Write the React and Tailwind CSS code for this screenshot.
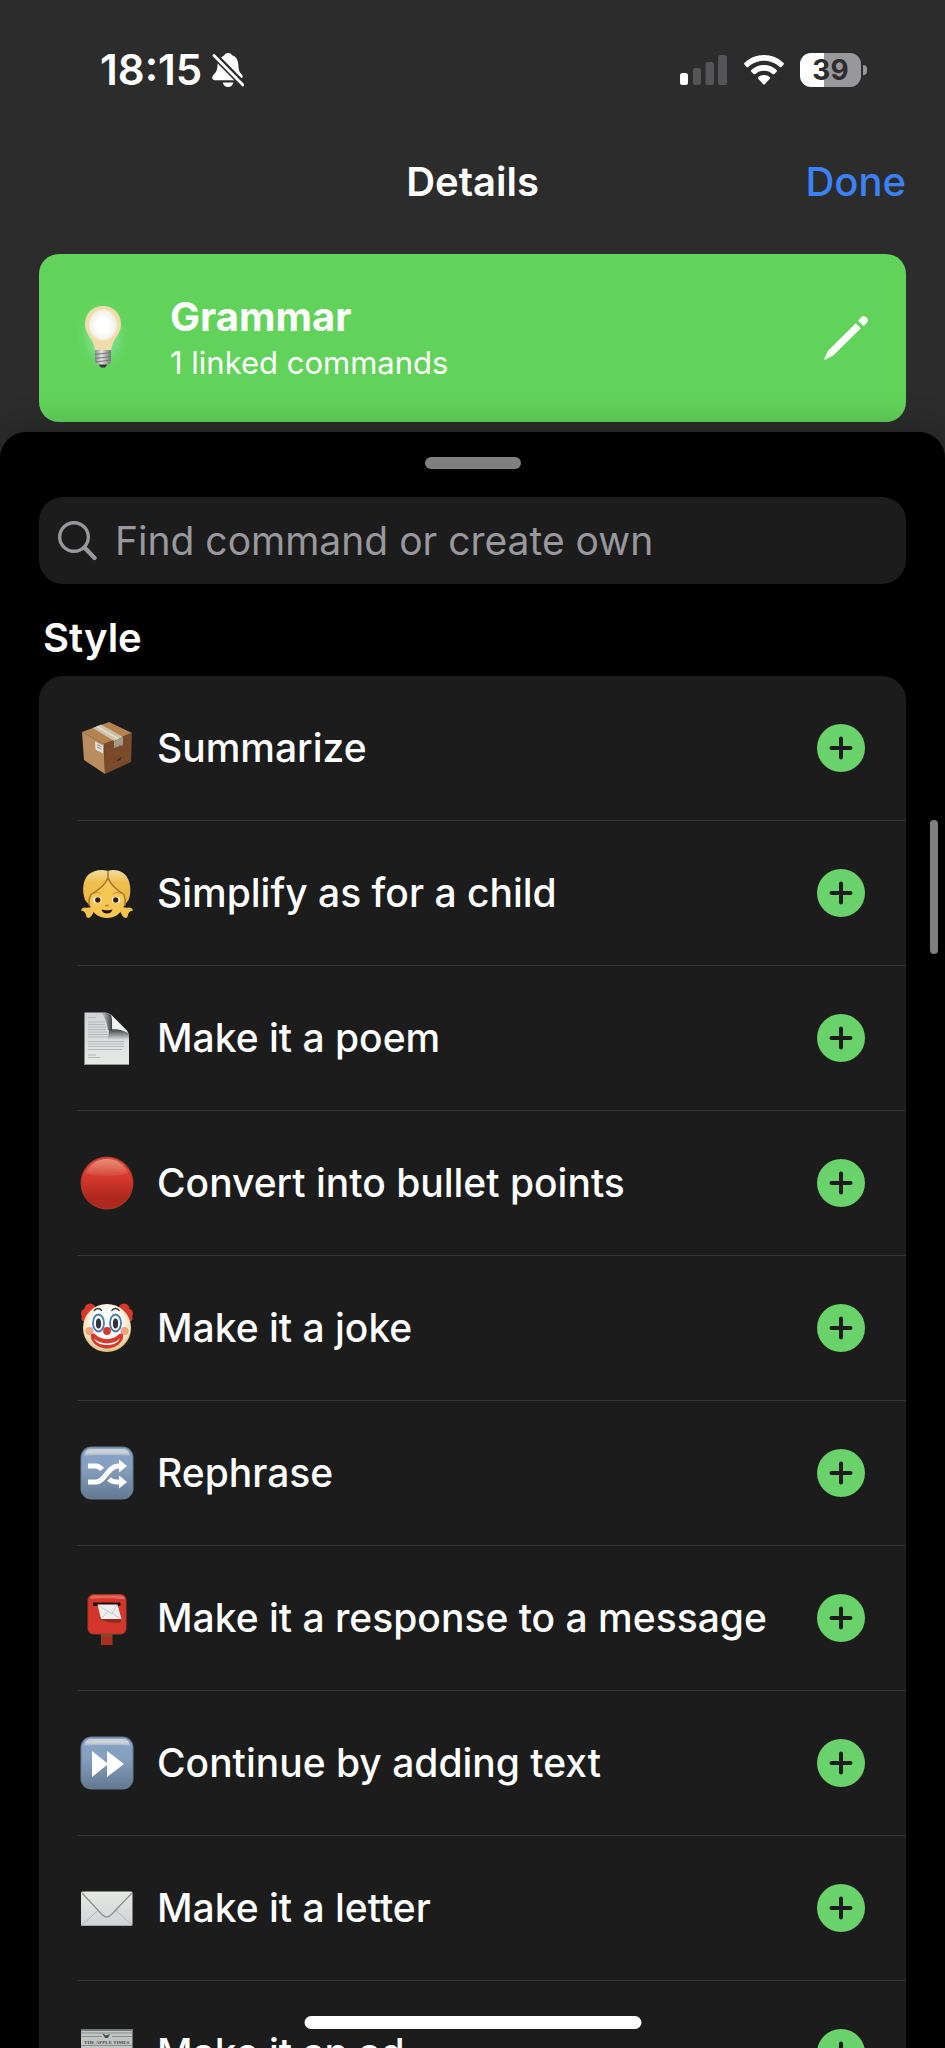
import React from "react";

function BellOffIcon() {
  return (
    <svg className="h-9 w-8" viewBox="0 0 32 36" fill="none" aria-hidden="true">
      <path
        d="M16 1c-1.900 0-3.300.9-3.900 2.500-1.200.5-2.300 1.200-3.100 2.100L29.500 26.200c.8-.3 1.200-1 1.200-1.700 0-1.200-.9-2-1.900-3.100-1.600-1.700-2.200-4-2.500-8.900-.3-5-2.300-8-6.400-9.200C19.300 1.700 17.900 1 16 1Z"
        fill="white"
      />
      <path
        d="M5.900 10.600 23.200 28.200H3c-1.700 0-2.800-1-2.800-2.500 0-1.500 1-2.500 2-3.600 2-2.100 2.900-3.900 3.300-8.600.1-1 .2-2 .4-2.900Z"
        fill="white"
      />
      <path d="M10.800 30.500h10.600c-.4 2.700-2.500 4.500-5.300 4.500s-4.900-1.800-5.300-4.500Z" fill="white" />
      <path d="m2 3.500 29 29.500" stroke="#2c2c2c" strokeWidth="6" />
      <path d="m2 3.500 29 29.500" stroke="white" strokeWidth="2.800" strokeLinecap="round" />
    </svg>
  );
}

function SignalIcon() {
  return (
    <svg className="h-8 w-12" viewBox="0 0 48 32" aria-hidden="true">
      <rect x="0" y="19" width="8" height="12" rx="2.500" fill="#ffffff" />
      <rect x="13" y="14" width="8" height="17" rx="2.500" fill="#555557" />
      <rect x="25.500" y="8" width="8.500" height="23" rx="2.500" fill="#555557" />
      <rect x="38" y="1" width="9" height="30" rx="2.500" fill="#555557" />
    </svg>
  );
}

function WifiIcon() {
  return (
    <svg className="h-8 w-10" viewBox="0 0 40 32" fill="white" aria-hidden="true">
      <path d="M20 1C12.400 1 5.600 4 .4 8.900c-.5.500-.5 1.200 0 1.700l2.300 2.300c.5.500 1.200.5 1.700 0C8.500 9 14 6.700 20 6.700S31.500 9 35.600 12.900c.5.500 1.200.5 1.700 0l2.300-2.300c.5-.5.500-1.200 0-1.700C34.400 4 27.600 1 20 1Z" />
      <path d="M20 11c-4.900 0-9.300 1.900-12.700 5-.5.500-.5 1.200 0 1.700l2.400 2.300c.4.400 1.100.4 1.600 0 2.300-2.100 5.400-3.300 8.700-3.300s6.400 1.200 8.700 3.300c.5.400 1.200.4 1.600 0l2.400-2.300c.5-.5.500-1.200 0-1.700-3.400-3.100-7.800-5-12.700-5Z" />
      <path d="M20 21c-2.200 0-4.200.8-5.800 2.100-.5.500-.5 1.200 0 1.700l5 5.400c.4.500 1.200.5 1.600 0l5-5.400c.5-.5.500-1.200 0-1.700C24.200 21.800 22.200 21 20 21Z" />
    </svg>
  );
}

function Battery() {
  return (
    <div className="flex items-center gap-0.5">
      <div className="flex h-[34px] w-[61px] items-center justify-center rounded-[11px] bg-linear-to-r from-white from-39% to-[#98989b] to-39% text-[28px] leading-8 font-bold text-[#2c2c2c]">
        39
      </div>
      <div className="h-2.5 w-1 rounded-r-full bg-[#98989b]" />
    </div>
  );
}

function BulbIcon() {
  return (
    <svg className="h-20 w-14 shrink-0" viewBox="0 0 56 80" aria-hidden="true">
      <defs>
        <radialGradient id="bulbGlow">
          <stop offset="0.5" stopColor="#7be08a" stopOpacity="0.8" />
          <stop offset="1" stopColor="#61d35a" stopOpacity="0" />
        </radialGradient>
        <radialGradient id="bulbGlass">
          <stop offset="0.4" stopColor="#ffffff" />
          <stop offset="0.85" stopColor="#f3f1ea" />
          <stop offset="1" stopColor="#f0dcaa" />
        </radialGradient>
        <linearGradient id="bulbBase">
          <stop offset="0" stopColor="#8b8b8d" />
          <stop offset="0.4" stopColor="#e2e2e2" />
          <stop offset="1" stopColor="#77777a" />
        </linearGradient>
      </defs>
      <ellipse cx="28" cy="37" rx="28" ry="38" fill="url(#bulbGlow)" />
      <path
        d="M28 8C17.500 8 10 15.500 10 26c0 6 2.500 10 5.500 14.500C18 44.500 19.500 48 20 53h16c.5-5 2-8.500 4.500-12.500C43.500 36 46 32 46 26 46 15.500 38.500 8 28 8Z"
        fill="#f0dcaa"
      />
      <ellipse cx="28" cy="27" rx="15" ry="16.500" fill="url(#bulbGlass)" />
      <path d="M20 52h16v11c0 2-1.500 3.500-3.500 4h-9C21.500 66.500 20 65 20 63Z" fill="url(#bulbBase)" />
      <path d="m20 56.500 16-2M20 60.500l16-2M21 64l14.500-2" stroke="#76767a" strokeWidth="1" />
      <path d="M23.500 66.500h9L30 69.500h-4Z" fill="#33363a" />
    </svg>
  );
}

function PencilIcon() {
  return (
    <svg className="size-11" viewBox="0 0 44 44" fill="white" aria-hidden="true">
      <path d="m31.800 7.200 5 5L9.500 39.200 1.400 43.600c-.8.400-1.400-.2-1.100-1L4.300 34.400Z" />
      <path d="m34.200 4.800 2.600-3.200c1.800-2 5-1.400 6.300.6 1.200 1.900.9 3.700-.5 5l-3.200 2.700Z" />
    </svg>
  );
}

function SearchIcon() {
  return (
    <svg className="size-10 shrink-0" viewBox="0 0 40 40" fill="none" stroke="#98989d" aria-hidden="true">
      <circle cx="17" cy="16" r="14.300" strokeWidth="3.400" />
      <path d="m27.500 26.500 10 10.500" strokeWidth="4.400" strokeLinecap="round" />
    </svg>
  );
}

function PlusIcon() {
  return (
    <svg className="size-12" viewBox="0 0 48 48" aria-hidden="true">
      <circle cx="24" cy="24" r="24" fill="#6ad26a" />
      <path d="M24 14.500v19M14.500 24h19" stroke="#1c1c1c" strokeWidth="4" strokeLinecap="round" />
    </svg>
  );
}

function Emoji({ children }) {
  return (
    <svg className="size-[54px] shrink-0" viewBox="0 0 54 54" aria-hidden="true">
      {children}
    </svg>
  );
}

function PackageEmoji() {
  return (
    <Emoji>
      <path d="M29 1 52 12 24 23 2 11Z" fill="#b5834f" />
      <path d="M2 11 24 23 25 53 4 39Z" fill="#b98d5d" />
      <path d="M24 23 52 12 51 41 25 53Z" fill="#7b4a2a" />
      <path d="m13 7 8-3.500L43 16l-9 4Z" fill="#cbc3b2" />
      <path d="m17 5.500 21.500 12.500" stroke="#e9dfb8" strokeWidth="1.500" />
      <path d="m34 20 9-4v8l-9 3Z" fill="#a39a8c" />
      <path d="m15 20.500 8 4v8l-7.500-4Z" fill="#e3e3e0" />
      <path d="m17 23.500 4.500 2.200M17 26l4.500 2.200" stroke="#8c8c8c" strokeWidth="1" />
      <path d="m37 39.500 4-3-1 2.500Z" fill="#3c2314" stroke="#3c2314" strokeWidth="0.800" />
      <path d="m28 29 20-8M28 46l20-9" stroke="#94602f" strokeWidth="1" strokeDasharray="1 3" />
    </Emoji>
  );
}

function GirlEmoji() {
  return (
    <Emoji>
      <defs>
        <linearGradient id="girlHair" x2="0" y2="1">
          <stop offset="0" stopColor="#f3dca0" />
          <stop offset="0.35" stopColor="#efbf4d" />
          <stop offset="1" stopColor="#e9b43f" />
        </linearGradient>
      </defs>
      <path d="M14 40c-3 1.500-6 2-9 1.500-2 0-3.500 1-4 3 3 .5 4.500 2 5 4.500.3 2 1 3 2.500 3 2.500-.5 4-3.500 5.500-7Z" fill="#f2c14e" />
      <path d="M40 40c3 1.500 6 2 9 1.500 2 0 3.500 1 4 3-3 .5-4.500 2-5 4.500-.3 2-1 3-2.500 3-2.500-.5-4-3.500-5.500-7Z" fill="#f2c14e" />
      <path
        d="M28 5C33 3 41 4 46 9.500 51 16 51.500 27 48.500 34L44 40H10L5 34C2 25 2.500 15 8 9 14 3.500 22 3 28 5Z"
        fill="url(#girlHair)"
      />
      <path d="M28 12c-3 7-9 12-17 16-2 5-2 9-.5 13 3 7 9 11 16.500 11s13.500-4 16.500-11c1.500-4 1.500-8 0-13C36 24 31 19 28 12Z" fill="#f6c753" />
      <path
        d="M28 4.500V12C25 19 19 24 11 28.500c-2 3.500-2.500 7-1.500 11.500M28 12c3 7 8.500 12 16 16.500 1.500 4 1.500 7.500 1 11.500"
        fill="none"
        stroke="#a5702a"
        strokeWidth="1.400"
      />
      <path d="M13 28c3-2 6-2 8 0M33 28c3-2 6-2 8 0" fill="none" stroke="#c08a35" strokeWidth="1" />
      <ellipse cx="17.500" cy="34" rx="4.200" ry="3.200" fill="#fff" />
      <ellipse cx="36" cy="34" rx="4.200" ry="3.200" fill="#fff" />
      <circle cx="17.800" cy="34" r="2.700" fill="#3b1f0c" />
      <circle cx="35.700" cy="34" r="2.700" fill="#3b1f0c" />
      <path d="M25 39.500h4" stroke="#b9772a" strokeWidth="1.200" />
      <path d="M21.500 43.500c3 1 8 1 11 0-1 3-3 4-5.500 4s-4.500-1-5.500-4Z" fill="#2c1008" />
    </Emoji>
  );
}

function PageEmoji() {
  return (
    <Emoji>
      <defs>
        <linearGradient id="pagePaper" x2="0" y2="1">
          <stop offset="0" stopColor="#d2d3d6" />
          <stop offset="1" stopColor="#e8eae7" />
        </linearGradient>
        <linearGradient id="pageShadeSide">
          <stop offset="0" stopColor="#3f4043" stopOpacity="0" />
          <stop offset="1" stopColor="#3f4043" />
        </linearGradient>
        <linearGradient id="pageShadeBelow" x2="0" y2="1">
          <stop offset="0" stopColor="#3f4043" />
          <stop offset="1" stopColor="#3f4043" stopOpacity="0" />
        </linearGradient>
      </defs>
      <path d="M4.500 1.500H25c4 0 7 3 11 7l8 8c3 3 5 5 5 8.500V54H4.500Z" fill="url(#pagePaper)" />
      <path
        d="M8 6.500h8M8 11h17M8 13.500h17M8 16h18M8 18.500h18M8 21h19M8 23.500h20M8 26h21M8 30.500h36M8 33h36M8 35.500h36M8 38.500h34M8 44h8M8 46.500h12"
        stroke="#b4b6ba"
        strokeWidth="1"
      />
      <path d="M21 1.500h4c3 .5 5 1.500 7 3.500v14h-4C27 12 25 6 21 1.500Z" fill="url(#pageShadeSide)" />
      <path d="M29 18.500c8-1 14 0 19.500 3.500.5 1 .5 3 .5 7H28Z" fill="url(#pageShadeBelow)" />
      <path d="M31 3.800 48 22c-5-3-10-4.500-16-4.500.5-5 .5-9-1-13.700Z" fill="#f0f1f1" />
      <path d="M4.500 53.500H49" stroke="#96999c" />
    </Emoji>
  );
}

function RedCircleEmoji() {
  return (
    <Emoji>
      <defs>
        <linearGradient id="redBall" x2="0" y2="1">
          <stop offset="0.150" stopColor="#d9473a" />
          <stop offset="0.400" stopColor="#d4372a" />
          <stop offset="0.800" stopColor="#ae281f" />
        </linearGradient>
        <linearGradient id="redShine" x2="0" y2="1">
          <stop offset="0" stopColor="#eda287" />
          <stop offset="1" stopColor="#d84a3d" />
        </linearGradient>
      </defs>
      <circle cx="27" cy="27" r="26.500" fill="#a93624" />
      <circle cx="27" cy="27" r="25.500" fill="url(#redBall)" />
      <path d="M6 17C10 8 17 3 27 3s17 5 21 14c-3 2-11 3-21 3S9 19 6 17Z" fill="url(#redShine)" opacity="0.800" />
    </Emoji>
  );
}

function ClownEmoji() {
  return (
    <Emoji>
      <defs>
        <radialGradient id="clownFace" cx="0.500" cy="0.400" r="0.600">
          <stop offset="0.500" stopColor="#ffffff" />
          <stop offset="0.800" stopColor="#f5e3b8" />
          <stop offset="1" stopColor="#d9bd82" />
        </radialGradient>
      </defs>
      <g fill="#d6392c">
        <circle cx="10" cy="8" r="5.500" />
        <circle cx="5.500" cy="12.500" r="4.500" />
        <circle cx="5" cy="17" r="3.500" />
        <circle cx="44" cy="8" r="5.500" />
        <circle cx="48.500" cy="12.500" r="4.500" />
        <circle cx="49" cy="17" r="3.500" />
      </g>
      <circle cx="27" cy="27" r="24" fill="url(#clownFace)" />
      <circle cx="9.500" cy="30" r="4" fill="#ee8f6c" opacity="0.800" />
      <circle cx="44.500" cy="30" r="4" fill="#ee8f6c" opacity="0.800" />
      <path d="M14 10c2-3.500 6-3.500 8 0M31.500 10c2-3.500 6-3.500 8 0" fill="none" stroke="#333" strokeWidth="1.500" />
      <ellipse cx="18.500" cy="22" rx="5.500" ry="8.500" fill="#fff" stroke="#4478b5" strokeWidth="1.800" />
      <ellipse cx="35.500" cy="22" rx="5.500" ry="8.500" fill="#fff" stroke="#4478b5" strokeWidth="1.800" />
      <ellipse cx="18.500" cy="22.500" rx="2.600" ry="5" fill="#30343a" />
      <ellipse cx="35.500" cy="22.500" rx="2.600" ry="5" fill="#30343a" />
      <path d="M11 33.500c2-2 4-.5 5 .5 5 5.500 17 5.500 22 0 1-1 3-2.500 5-.5 1.500 7-7 14-16 14S9.500 40.500 11 33.500Z" fill="#d6392c" />
      <path d="M14 37.500c7 6.500 19 6.500 26 0-2 4.500-7 6.500-13 6.500s-11-2-13-6.500Z" fill="#fff" />
      <circle cx="27" cy="30" r="3.900" fill="#d6392c" />
    </Emoji>
  );
}

function Keycap({ id, children }) {
  return (
    <Emoji>
      <defs>
        <linearGradient id={id} x2="0" y2="1">
          <stop offset="0" stopColor="#84a1c6" />
          <stop offset="0.400" stopColor="#86a0c0" />
          <stop offset="1" stopColor="#637991" />
        </linearGradient>
        <linearGradient id={`${id}Shine`} x2="0" y2="1">
          <stop offset="0.500" stopColor="#ccd1d8" />
          <stop offset="1" stopColor="#9db1cb" />
        </linearGradient>
      </defs>
      <rect x="0.500" y="0.500" width="53" height="53" rx="11" fill="#68798c" />
      <rect x="1.500" y="1.500" width="51" height="51" rx="10" fill={`url(#${id})`} />
      <path d="M4 10c1-5 3-7 7-7h32c4 0 6 2 7 7-6-1.500-40-1.500-46 0Z" fill={`url(#${id}Shine)`} />
      {children}
    </Emoji>
  );
}

function ShuffleEmoji() {
  return (
    <Keycap id="shuffleKey">
      <path d="M8 36h8c9 0 12-16 22-16h2M8 20h8c3 0 4.500 1.500 6 3.500M29 33c2 2 4.500 3 8 3h3" fill="none" stroke="#fff" strokeWidth="5" />
      <path d="m39 13.500 8 6.500-8 6.500ZM39 29.500l8 6.500-8 6.500Z" fill="#fff" />
    </Keycap>
  );
}

function FastForwardEmoji() {
  return (
    <Keycap id="forwardKey">
      <path d="m12 15 15 12V15l17 13-17 13V29L12 41Z" fill="#fff" />
    </Keycap>
  );
}

function PostboxEmoji() {
  return (
    <Emoji>
      <path d="M21 41h11.500v13H21Z" fill="#7c4a28" />
      <path d="M22 46h9.500v8H22Z" fill="#b02a20" />
      <rect x="7.500" y="3" width="39" height="40.500" rx="6" fill="#9f3b25" />
      <rect x="8.500" y="4" width="37" height="38.500" rx="5" fill="#d4362b" />
      <path d="M10 8c1-3 2-3.500 5-3.500h25c3 0 4.500 1 4.500 4-7-1.500-28-1.500-34.500-.5Z" fill="#e5695a" />
      <path d="M19 26h22v5c0 2-20 1-22-5Z" fill="#8d2f1d" />
      <rect x="13" y="11.500" width="27.500" height="3.500" rx="1" fill="#1c0c0a" />
      <path d="M17.500 13.500h20L41.500 28H21Z" fill="#eeeeee" />
      <path d="m18 14 13.500 8.500 6-8.500M21 28l7-8M41 28l-9-6" fill="none" stroke="#c4c4c4" strokeWidth="0.900" />
    </Emoji>
  );
}

function EnvelopeEmoji() {
  return (
    <Emoji>
      <defs>
        <linearGradient id="mailPaper" x2="0" y2="1">
          <stop offset="0" stopColor="#e7e9e5" />
          <stop offset="1" stopColor="#d0d2d5" />
        </linearGradient>
      </defs>
      <rect x="1" y="10.500" width="51.500" height="34.500" rx="1.500" fill="url(#mailPaper)" />
      <path d="m2 44 17-15.500M52 44 35 28.500" fill="none" stroke="#b4b5b8" strokeWidth="1" />
      <path d="m2 12 20 21.500c3.500 3.500 6 3.500 9.500 0L52 12" fill="none" stroke="#8c8d8f" strokeWidth="1.200" />
      <path d="M1.500 44.500h50.500" stroke="#a7a8aa" />
    </Emoji>
  );
}

function NewspaperEmoji() {
  return (
    <Emoji>
      <rect x="1" y="3" width="51.500" height="51" fill="#c3c5c5" />
      <path d="M1 4h51.500" stroke="#777a7a" strokeWidth="2" />
      <path d="M1 7h51.500M1 10.500h21M32 10.500h20.500M1 19.500h51.500" stroke="#8b8e8e" strokeWidth="1.200" />
      <path d="m22 7 4 2.500 4-1.500-2 4h-3Z" fill="#4b4d4d" />
      <text x="26.700" y="17.500" textAnchor="middle" fontFamily="Liberation Serif, serif" fontWeight="700" fontSize="5" fill="#4b4d4d">
        THE APPLE TIMES
      </text>
      <path d="M3 23h48M3 26h48M3 29h48" stroke="#929595" strokeWidth="1" />
    </Emoji>
  );
}

const commands = [
  { label: "Summarize", Icon: PackageEmoji },
  { label: "Simplify as for a child", Icon: GirlEmoji },
  { label: "Make it a poem", Icon: PageEmoji },
  { label: "Convert into bullet points", Icon: RedCircleEmoji },
  { label: "Make it a joke", Icon: ClownEmoji },
  { label: "Rephrase", Icon: ShuffleEmoji },
  { label: "Make it a response to a message", Icon: PostboxEmoji },
  { label: "Continue by adding text", Icon: FastForwardEmoji },
  { label: "Make it a letter", Icon: EnvelopeEmoji },
  { label: "Make it an ad", Icon: NewspaperEmoji },
];

function StatusBar() {
  return (
    <div className="flex items-center justify-between pt-[46px] pr-[78px] pl-[100px]">
      <div className="flex items-center gap-2.5">
        <span className="text-[42px] leading-[48px] font-semibold">18:15</span>
        <BellOffIcon />
      </div>
      <div className="flex items-center gap-4">
        <SignalIcon />
        <WifiIcon />
        <Battery />
      </div>
    </div>
  );
}

function CommandRow({ label, Icon }) {
  return (
    <li className="ml-[38px] flex h-[145px] shrink-0 items-center border-b border-[#363638] pr-[41px] pl-[3px]">
      <Icon />
      <span className="min-w-0 flex-1 truncate pl-[23px] text-[39px] leading-[52px] font-medium">{label}</span>
      <button type="button" aria-label={`Add ${label}`}>
        <PlusIcon />
      </button>
    </li>
  );
}

export default function App() {
  return (
    <div className="relative flex h-screen flex-col overflow-hidden bg-[#2c2c2c] font-['Inter',sans-serif] text-white">
      <StatusBar />

      <header className="grid grid-cols-[1fr_auto_1fr] items-center px-[39px] pt-16 pb-12">
        <h1 className="col-start-2 text-[40px] leading-[48px] font-semibold">Details</h1>
        <button type="button" className="justify-self-end text-[40px] leading-[48px] font-medium text-[#3b82f6]">
          Done
        </button>
      </header>

      <section className="mx-[39px] mb-2.5 flex h-[168px] shrink-0 items-center rounded-[20px] bg-[#61d35a] pr-[38px] pl-9">
        <BulbIcon />
        <div className="flex-1 pt-0.5 pl-[39px]">
          <h2 className="text-[40px] leading-[48px] font-bold">Grammar</h2>
          <p className="text-[31px] leading-[44px]">1 linked commands</p>
        </div>
        <button type="button" aria-label="Edit">
          <PencilIcon />
        </button>
      </section>

      <main className="relative flex min-h-0 flex-1 flex-col rounded-t-[26px] bg-black px-[39px] pt-[25px] shadow-[0_0_36px_rgba(0,0,0,0.3)]">
        <div className="h-3 w-24 shrink-0 self-center rounded-full bg-[#7f7f7f]" />

        <label className="mt-7 flex h-[87px] shrink-0 items-center gap-[18px] rounded-[24px] bg-[#1c1c1c] px-[18px]">
          <SearchIcon />
          <input
            type="text"
            aria-label="Find command or create own"
            placeholder="Find command or create own"
            className="min-w-0 flex-1 bg-transparent text-[39px] leading-[52px] outline-none placeholder:text-[#98989d]"
          />
        </label>

        <h2 className="mt-7 mb-3 pl-1 text-[40px] leading-[52px] font-semibold">Style</h2>

        <ul className="flex min-h-0 flex-1 flex-col overflow-hidden rounded-t-[24px] bg-[#1c1c1c]">
          {commands.map((command) => (
            <CommandRow key={command.label} {...command} />
          ))}
        </ul>

        <div className="absolute top-[388px] right-[7px] h-[134px] w-2 rounded-full bg-[#7f7f7f]" />
      </main>

      <div className="absolute bottom-[19px] left-1/2 h-[13px] w-[337px] -translate-x-1/2 rounded-full bg-white" />
    </div>
  );
}
